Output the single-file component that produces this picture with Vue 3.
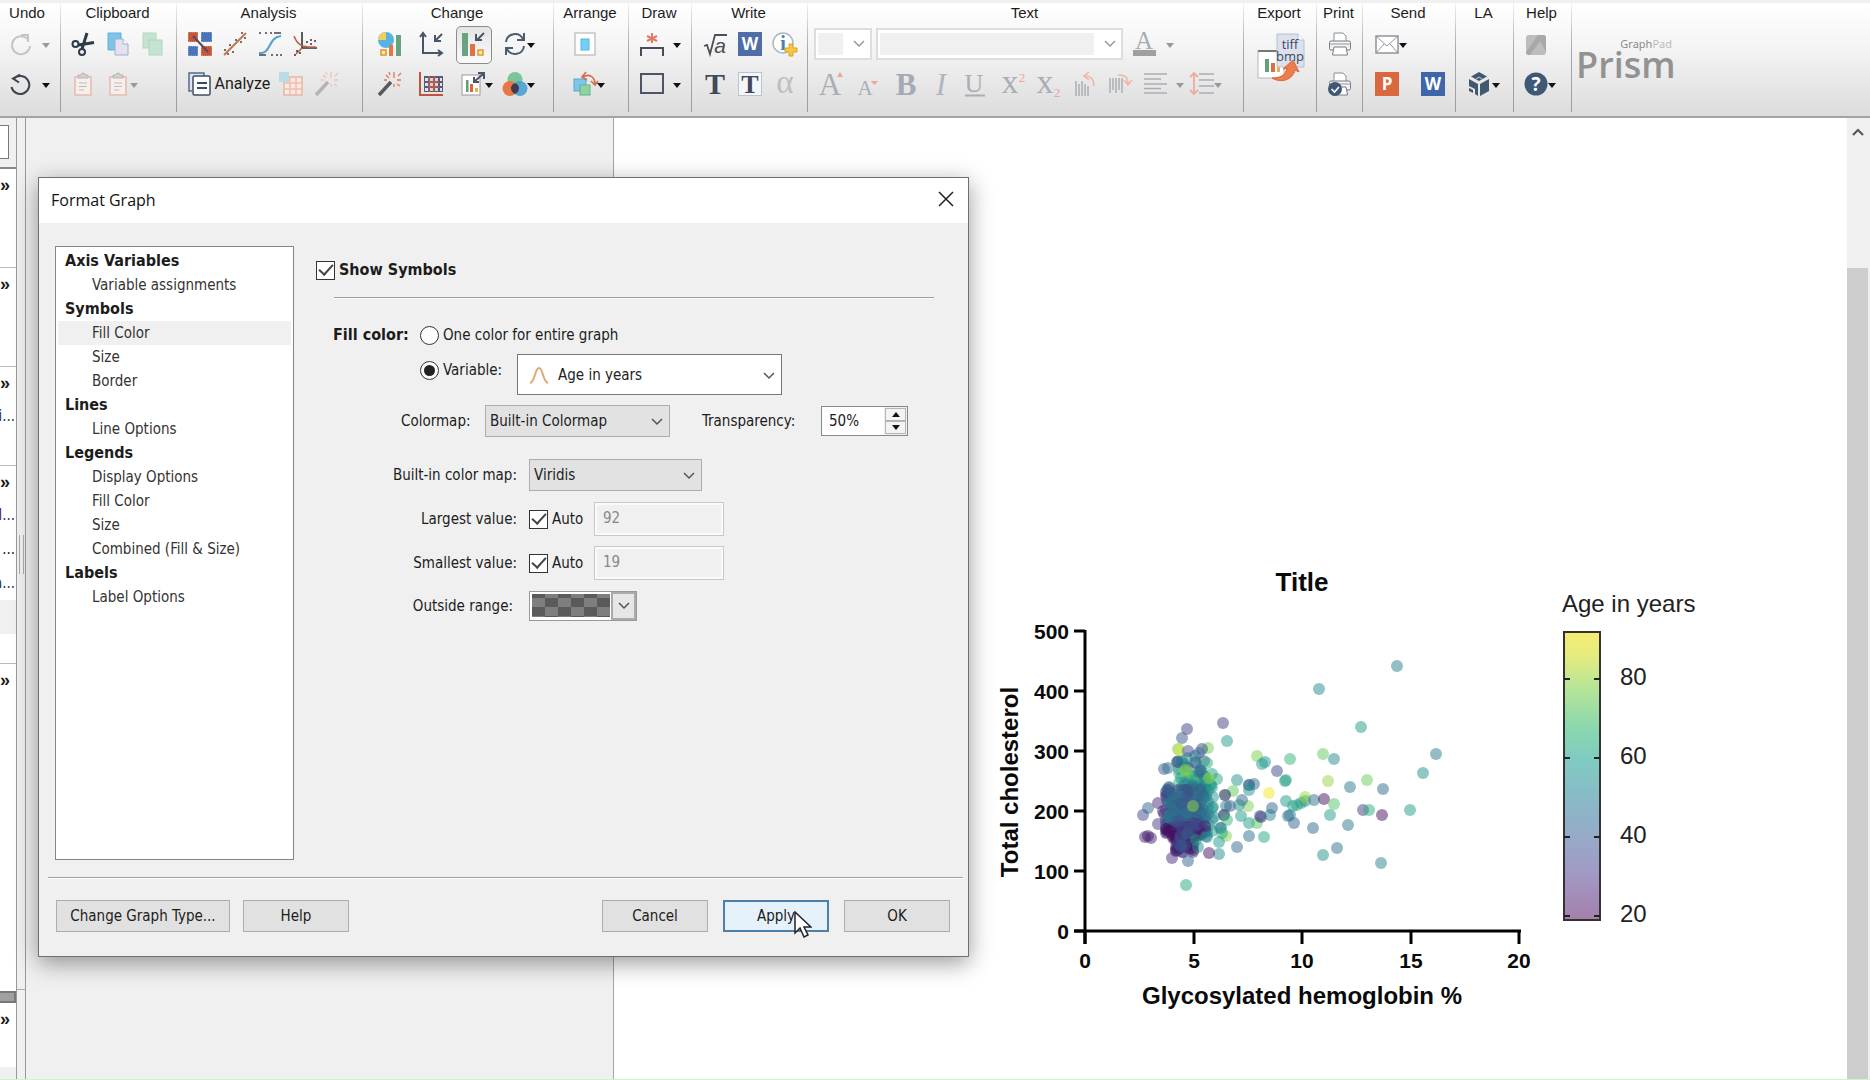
<script setup>
import { ref } from 'vue'

const ink = '#3f4a5a'

const page = (x, y, w, h, fill, stroke) =>
  `<path d="M${x} ${y}h${w - 5}l5 5v${h - 5}h-${w}z" fill="${fill}" stroke="${stroke}"/><path d="M${x + w - 5} ${y}v5h5" fill="#fff" stroke="${stroke}"/>`

const letter = (t, x, y, size, fill, extra = '') =>
  `<text x="${x}" y="${y}" font-size="${size}" fill="${fill}" text-anchor="middle" ${extra}>${t}</text>`
const serif = 'font-family="Liberation Serif, serif"'
const sans = 'font-family="Open Sans, sans-serif" font-weight="700"'

const clipboard = `<rect x="4" y="5" width="16" height="18" fill="#f5f0ee" stroke="#e9c6bb" stroke-width="2"/><path d="M7 6h10V3h-3a2 2 0 0 0-4 0H7z" fill="#d2d2d2" stroke="#b5b5b5"/><path d="M8 11h8M8 14.500h8M8 18h5" stroke="#c9b9b4"/>`
const printer = `<path d="M6 9V1h9l3 3v5" fill="#fff" stroke="#8a8f98"/><rect x="1.500" y="9" width="21" height="9" rx="1.500" fill="#f2f3f5" stroke="#777d88"/><path d="M1.500 12h21" stroke="#999"/><path d="M6 15h12l1.500 8h-15z" fill="#fff" stroke="#777d88"/>`
const wand = (a, b) =>
  `<path d="M2 23L14 10" stroke="${a}" stroke-width="3.500"/><path d="M17 6V0M17 12v3M12 6L9 3M21 4l3-3M20 8h4M10 8H7M20 12l3 2M13 3l-1-3" stroke="${b}" stroke-width="1.300"/>`

const icons = {
  redo: '<path d="M18 6.500A9 9 0 1 0 21 14M12 3h7v7" fill="none" stroke="#c2c4c7" stroke-width="2"/>',
  undo: '<path d="M5 6.500A9 9 0 1 1 2.500 15M11 2.500L4 6.500l6 4" fill="none" stroke="#3b4550" stroke-width="2"/>',
  cut: '<g fill="none" stroke="#2f3a49"><circle cx="4.500" cy="12" r="3" stroke-width="2"/><circle cx="11" cy="20" r="3" stroke-width="2"/><path d="M7.500 13L23 10.500M11 17L16 1" stroke-width="3"/></g>',
  copy: '<path d="M2 1h13v17H2z" fill="#7cc4ea" stroke="#62b0dc"/>' + page(9, 7, 13, 16, '#e4e2f0', '#9fb0cc'),
  stack: '<rect x="2" y="1" width="13" height="15" fill="#c5e3cf" stroke="#b5d9c1"/><rect x="8" y="8" width="13" height="15" fill="#c5e3cf" stroke="#b0d5bd"/>',
  clip: clipboard,
  columns: '<g stroke="#fff" stroke-dasharray="1 1" stroke-width=".6"><rect width="10" height="10" fill="#c4573a"/><rect x="13" width="11" height="10" fill="#4a74b8"/><rect y="14" width="10" height="10" fill="#4a74b8"/><rect x="13" y="14" width="11" height="10" fill="#c4573a"/></g><path d="M5 4l15 16" stroke="#5a4a5a" stroke-width="2"/>',
  fit: '<path d="M1 23L23 1" stroke="#c9704f" stroke-width="2"/><g fill="#444"><circle cx="2" cy="18" r="1"/><circle cx="7" cy="13" r="1"/><circle cx="10" cy="20" r="1"/><circle cx="13" cy="8" r="1"/><circle cx="18" cy="10" r="1"/><circle cx="19" cy="1" r="1"/><circle cx="22" cy="6" r="1"/><circle cx="5" cy="22" r="1"/></g>',
  curve: '<path d="M1 21c12 2 9-16 22-17" fill="none" stroke="#5aa2cc" stroke-width="2.200"/><path d="M1 1h2M7 1h2M12 1h2M16 1h7M1 23h7M13 23h2M18 23h2M22 23h2" stroke="#444" stroke-width="1.600"/>',
  decay: '<path d="M9 0v16h15" fill="none" stroke="#333" stroke-width="1.600"/><path d="M1 4c3 8 7 12 22 11M9 16l-6 6" fill="none" stroke="#b9604a" stroke-width="1.600"/><g fill="#333"><circle cx="14" cy="10" r="1"/><circle cx="18" cy="8" r="1"/><circle cx="22" cy="9" r="1"/><circle cx="18" cy="12" r="1"/><circle cx="4" cy="19" r="1"/><circle cx="2" cy="23" r="1"/><circle cx="7" cy="21" r="1"/></g>',
  analyze: '<path d="M4 19H1V1h15v3" fill="#dfe5f0" stroke="#56698f" stroke-width="1.500"/><rect x="5" y="4" width="17" height="19" rx="1.500" fill="#fff" stroke="#3d4c66" stroke-width="1.500"/><path d="M9 11h10M9 16h10" stroke="#3d4c66" stroke-width="2"/>',
  table: '<rect x="5" y="5" width="18" height="18" fill="#fbeae4" stroke="#e8b6a4" stroke-width="1.500"/><path d="M5 11h18M5 17h18M11 5v18M17 5v18" stroke="#eebdac" stroke-width="1.500"/><rect width="10" height="10" fill="#b9dbe8"/>',
  wandOff: wand('#b4b4b4', '#f0c3b5'),
  wand: wand('#545a63', '#e0765a'),
  chartType: '<circle cx="9" cy="8" r="8" fill="#55b4e4"/><path d="M9 8V0A8 8 0 0 0 1 8z" fill="#f0cf5a"/><rect x="4" y="18" width="5" height="5" fill="#ffe9a8" stroke="#d9942f" stroke-width="1.500"/><rect x="12" y="13" width="4" height="11" fill="#e27845"/><rect x="19" y="3" width="5" height="21" fill="#66a37e"/>',
  axes: '<path d="M4 2v19h18M1 5l3-4 3 4M19 18l4 3-4 3M23 2l-7 7M16 3v6h6" fill="none" stroke="#49566a" stroke-width="2"/>',
  bars: '<rect x="1" y="1" width="6" height="23" fill="#6aa382"/><rect x="9" y="12" width="5" height="12" fill="#e07245"/><rect x="17" y="18" width="5" height="5" fill="#ffe7a0" stroke="#d99a37" stroke-width="1.500"/><path d="M23 1l-7 7M15 2v6h6" fill="none" stroke="#49566a" stroke-width="2"/>',
  cycle: '<path d="M3 10a9 9 0 0 1 17-3M21 1v7h-7M21 14a9 9 0 0 1-17 3M3 23v-7h7" fill="none" stroke="#4d5b6c" stroke-width="2"/>',
  grid: '<path d="M1 0v23h23" fill="none" stroke="#c2533d" stroke-width="2"/><rect x="5" y="4" width="19" height="16" fill="#55597c"/><path d="M6 6h3v3H6zM6 11h3v3H6zM6 16h3v3H6zM21 6h2v3h-2zM21 11h2v3h-2zM21 16h2v3h-2z" fill="#dfe2ee"/><path d="M11 6h3v3h-3zM11 11h3v3h-3zM11 16h3v3h-3zM16 6h3v3h-3zM16 11h3v3h-3zM16 16h3v3h-3z" fill="#f6cdbd"/><path d="M10 4v16M15 4v16M10 10h10M10 15h10" stroke="#cf6a4c"/>',
  resize: '<rect x="1" y="3" width="18" height="20" fill="#fff" stroke="#999"/><rect x="5" y="8" width="2.500" height="12" fill="#5f9e79"/><rect x="9" y="12" width="3" height="8" fill="#d8663e"/><rect x="14" y="16" width="3" height="4" fill="#e8b34d"/><path d="M13 10L23 1M17 1h6v6M13 5v5h5" fill="none" stroke="#49566a" stroke-width="2"/>',
  venn: '<circle cx="12" cy="7.500" r="7.500" fill="#7cc49a"/><circle cx="7" cy="16.500" r="7.500" fill="#e87747"/><circle cx="17" cy="16.500" r="7.500" fill="#4a9fd2" opacity=".9"/><path d="M12 11a7 7 0 0 0-4 4 7 7 0 0 0 4 7 7 7 0 0 0 4-7 7 7 0 0 0-4-4z" fill="#3f3d52"/>',
  center: '<rect x="2" y="1" width="20" height="22" fill="#fff" stroke="#aaa"/><rect x="8" y="7" width="8" height="11" fill="#78cdf4" stroke="#57b4e2"/>',
  rotate: '<rect x="1" y="7" width="12" height="12" fill="#7ec6ea" stroke="#5aa7d2"/><rect x="7" y="13" width="10" height="10" fill="#8ed2a6" stroke="#62b381"/><path d="M10 5c6-4 12 0 12 7M13 0l-4 5 5 3M18 9l4 4 3-4" fill="none" stroke="#d56a4d" stroke-width="1.600"/>',
  bracket: '<path d="M1 24v-8h22v8" fill="none" stroke="#454c5a" stroke-width="2"/><path d="M12 1v10M7 4l10 5M17 4L7 9" stroke="#e07a62" stroke-width="2"/>',
  square: '<rect x="1" y="2" width="22" height="19" fill="none" stroke="#4c5566" stroke-width="2"/>',
  sqrt: '<path d="M1 14l3-1 3 9L12 3h12" fill="none" stroke="#4a4f58" stroke-width="1.800"/>' + letter('a', 17, 21, 21, '#4a4f58', 'font-family="Liberation Sans, sans-serif" font-style="italic"'),
  wordBox: '<rect width="24" height="24" fill="#4f6ea8"/>' + letter('W', 12, 18, 17, '#fff', sans),
  info: '<circle cx="10" cy="11" r="10" fill="#fff" stroke="#aeb6c0" stroke-width="1.500"/>' + letter('i', 10, 18, 20, '#4a7fae', serif + ' font-weight="700"') + '<path d="M16 12h4v4h4v4h-4v4h-4v-4h-4v-4h4z" fill="#f6c744" stroke="#d9a32a"/>',
  bigT: letter('T', 12, 22, 30, ink, serif + ' font-weight="700"'),
  boxT: '<rect x=".5" y=".5" width="23" height="23" fill="#f4f6f9" stroke="#b8c4d4"/>' + letter('T', 12, 21, 26, ink, serif + ' font-weight="700"'),
  alpha: letter('α', 12, 21, 33, '#bcbfc4', serif),
  grow: letter('A', 11, 23, 31, '#a9aeb5', serif) + '<path d="M18 5l3-5 3 5z" fill="#efa595"/>',
  shrink: letter('A', 10, 23, 21, '#a9aeb5', serif) + '<path d="M16 9h7l-3.500 4z" fill="#efa595"/>',
  bold: letter('B', 15, 23, 31, '#a4abb4', serif + ' font-weight="700"'),
  italic: letter('I', 14, 23, 31, '#b0b5bc', serif + ' font-style="italic"'),
  under: letter('U', 11, 20, 26, '#a9aeb5', serif) + '<path d="M2 23.500h20" stroke="#a9aeb5" stroke-width="2"/>',
  sup: letter('x', 11, 21, 34, '#a9aeb5', serif) + letter('2', 23, 10, 13, '#efa595', serif),
  sub: letter('x', 10, 21, 34, '#a9aeb5', serif) + letter('2', 22, 25, 13, '#efa595', serif),
  turnUp: '<path d="M5 9v15M8 12v12M11 9v15M14 12v12M17 14v10" stroke="#a9aeb5" stroke-width="1.500"/><path d="M14 4c6 0 9 3 9 10M18 0l-5 4 5 4" fill="none" stroke="#f2b3a6" stroke-width="1.600"/>',
  turnDown: '<path d="M3 6v15M6 6v12M9 6v15M12 6v12M15 6v15" stroke="#a9aeb5" stroke-width="1.500"/><path d="M11 3c7 0 10 2 10 9M17 8l4 5 4-5" fill="none" stroke="#f2b3a6" stroke-width="1.600"/>',
  align: '<path d="M1 2h23M1 7h17M1 12h23M1 16.500h17M1 21h23" stroke="#a9aeb5" stroke-width="1.600"/>',
  spacing: '<path d="M9 2h15M9 8h15M9 14h15M9 21h15" stroke="#a9aeb5" stroke-width="1.600"/><path d="M4 1v21M0 5l4-4 4 4M0 18l4 4 4-4" fill="none" stroke="#f0ab9d" stroke-width="1.800"/>',
  fontColor: letter('A', 11, 17, 25, '#a9aeb5', serif) + '<rect y="18" width="23" height="6" fill="#a0a0a0"/>',
  printer,
  printCheck: printer + '<circle cx="7" cy="17" r="7" fill="#3f5878"/><path d="M3.500 17l3 3 4.500-5" fill="none" stroke="#fff" stroke-width="1.600"/>',
  mail: '<rect x="1" y="4" width="22" height="17" fill="#fff" stroke="#8e939c" stroke-width="1.500"/><path d="M1 4l11 10L23 4M1 21l8-9M23 21l-8-9" fill="none" stroke="#8e939c"/>',
  powerpoint: '<rect width="24" height="24" fill="#d9683f"/>' + letter('P', 12, 18, 17, '#fff', sans),
  word: '<rect width="24" height="24" fill="#3f66a8"/>' + letter('W', 12, 18, 17, '#fff', sans),
  cube: '<path d="M11 0l8 4.500-8 4.500-8-4.500z" fill="#41596e"/><path d="M1 7l9 5v12l-3-2v-5l-6-3zM21 7l-9 5v12l9-5z" fill="#41596e"/><path d="M1 16l4 2v3l-4-2z" fill="#41596e"/><path d="M8 7l3-2 3 2" fill="none" stroke="#c8d0d8"/>',
  prism: '<rect x="2" y="3" width="20" height="20" rx="3" fill="#bdbdbd"/><path d="M2 20L14 3h5a3 3 0 0 1 3 3v14L16 9 6 23H5a3 3 0 0 1-3-3z" fill="#a0a0a0" opacity=".7"/>',
  help: '<circle cx="12" cy="12" r="11.500" fill="#3f5878"/>' + letter('?', 12, 19, 19, '#fff', sans),
}

const b = (icon, label, more = {}) => ({ icon, label, ...more })
const groups = [
  { id: 'undo', title: 'Undo', rows: [[b('redo', 'Redo', { far: 1, off: 1 })], [b('undo', 'Undo', { far: 1 })]] },
  { id: 'clipboard', title: 'Clipboard', rows: [[b('cut', 'Cut'), b('copy', 'Copy'), b('stack', 'Duplicate')], [b('clip', 'Paste'), b('clip', 'Paste special', { near: 1, off: 1 })]] },
  { id: 'analysis', title: 'Analysis', rows: [[b('columns', 'Compare'), b('fit', 'Linear fit'), b('curve', 'Curve fit'), b('decay', 'Decay fit')], [b('analyze', 'Analyze', { text: 'Analyze' }), b('table', 'Change data'), b('wandOff', 'Wizard')]] },
  { id: 'change', title: 'Change', rows: [[b('chartType', 'Graph type'), b('axes', 'Format axes'), b('bars', 'Format graph', { pressed: 1 }), b('cycle', 'Reverse', { near: 1 })], [b('wand', 'Magic'), b('grid', 'Data on graph'), b('resize', 'Resize', { near: 1 }), b('venn', 'Color scheme', { near: 1 })]] },
  { id: 'arrange', title: 'Arrange', rows: [[b('center', 'Center')], [b('rotate', 'Rotate', { near: 1 })]] },
  { id: 'draw', title: 'Draw', rows: [[b('bracket', 'Bracket', { far: 1 })], [b('square', 'Shape', { far: 1 })]] },
  { id: 'write', title: 'Write', rows: [[b('sqrt', 'Equation'), b('wordBox', 'Word object'), b('info', 'Info')], [b('bigT', 'Text'), b('boxT', 'Text box'), b('alpha', 'Greek')]] },
  { id: 'text', title: 'Text', combos: true, rows: [[b('fontColor', 'Text color', { far: 1, off: 1 })], [b('grow', 'Larger'), b('shrink', 'Smaller'), b('bold', 'Bold'), b('italic', 'Italic'), b('under', 'Underline'), b('sup', 'Superscript'), b('sub', 'Subscript'), b('turnUp', 'Rotate left'), b('turnDown', 'Rotate right'), b('align', 'Align', { far: 1, off: 1 }), b('spacing', 'Line spacing', { near: 1, off: 1 })]] },
  { id: 'export', title: 'Export', rows: [] },
  { id: 'print', title: 'Print', rows: [[b('printer', 'Print')], [b('printCheck', 'Print preview')]] },
  { id: 'send', title: 'Send', rows: [[b('mail', 'Mail', { near: 1 })], [b('powerpoint', 'PowerPoint'), b('word', 'Word')]] },
  { id: 'la', title: 'LA', rows: [[], [b('cube', 'LabArchives', { near: 1 })]] },
  { id: 'help', title: 'Help', rows: [[b('prism', 'Prism')], [b('help', 'Help', { near: 1 })]] },
]

const sections = [
  { cls: 'normal', rows: [] },
  { cls: 'normal', rows: [] },
  { cls: 'normal', rows: [{ t: 'i...', c: 'teal' }] },
  { cls: 'tall', rows: [{ t: 'l...', c: 'violet' }, { t: '...' }, { t: 'a...', c: 'teal' }, { t: '', sel: true }] },
  { cls: 'rest', rows: [] },
]

const tree = [
  { name: 'Axis Variables', items: ['Variable assignments'] },
  { name: 'Symbols', items: ['Fill Color', 'Size', 'Border'], active: 0 },
  { name: 'Lines', items: ['Line Options'] },
  { name: 'Legends', items: ['Display Options', 'Fill Color', 'Size', 'Combined (Fill & Size)'] },
  { name: 'Labels', items: ['Label Options'] },
]

const showSymbols = ref(true)
const fillMode = ref('variable')
const autoMax = ref(true)
const autoMin = ref(true)

// Viridis ramp over the age range 19..92
const ramp = [[68, 1, 84], [72, 40, 120], [62, 73, 137], [49, 104, 142], [38, 130, 142], [31, 158, 137], [53, 183, 121], [110, 206, 88], [181, 222, 43], [253, 231, 37]]
function colorOf(age) {
  const t = Math.min(0.999, Math.max(0, (age - 19) / 73)) * 9
  const i = Math.floor(t)
  const mix = ramp[i].map((v, k) => Math.round(v + (ramp[i + 1][k] - v) * (t - i)))
  return `rgb(${mix.join(',')})`
}

// Dense centre of the cloud: count, x range, y range, age range
const bands = [
  [12, 1178, 1210, 754, 772, 38, 60],
  [24, 1178, 1206, 772, 788, 45, 70],
  [34, 1192, 1216, 784, 832, 50, 62],
  [40, 1163, 1192, 790, 832, 20, 36],
  [60, 1166, 1206, 788, 820, 34, 52],
  [50, 1166, 1206, 812, 832, 38, 50],
  [40, 1164, 1206, 826, 836, 20, 34],
  [44, 1172, 1194, 834, 852, 19, 32],
  [16, 1176, 1200, 818, 846, 30, 44],
]
let seed = 11
const rand = () => (seed = (seed * 16807) % 2147483647) / 2147483647
const cloud = bands.flatMap(([n, x0, x1, y0, y1, a0, a1]) =>
  Array.from({ length: n }, () => [
    Math.round(x0 + rand() * (x1 - x0)),
    Math.round(y0 + rand() * (y1 - y0)),
    a0 + rand() * (a1 - a0),
  ]))

const outer = [
  [1397, 666, 50], [1319, 689, 54], [1361, 727, 58], [1436, 754, 48], [1423, 773, 55], [1223, 723, 33], [1227, 741, 59],
  [1187, 729, 33], [1182, 738, 38], [1257, 756, 77], [1265, 762, 56], [1262, 764, 60], [1290, 759, 67], [1323, 754, 74],
  [1334, 759, 54], [1277, 771, 35], [1286, 780, 64], [1285, 781, 58], [1328, 781, 80], [1367, 780, 75], [1350, 787, 49],
  [1383, 789, 44], [1269, 793, 91], [1286, 801, 59], [1297, 805, 64], [1293, 806, 60], [1301, 803, 58], [1305, 801, 56],
  [1305, 797, 80], [1314, 800, 46], [1324, 799, 22], [1334, 804, 72], [1330, 815, 60], [1363, 810, 32], [1369, 810, 64],
  [1382, 815, 22], [1410, 810, 59], [1348, 825, 48], [1313, 828, 44], [1294, 823, 42], [1288, 816, 42], [1290, 815, 50],
  [1337, 848, 46], [1323, 855, 56], [1381, 863, 52], [1237, 847, 43], [1249, 836, 45], [1264, 837, 62], [1249, 823, 60],
  [1257, 823, 72], [1261, 817, 28], [1260, 816, 36], [1270, 815, 50], [1272, 808, 42], [1241, 816, 58], [1248, 806, 77],
  [1242, 800, 42], [1239, 805, 54], [1237, 780, 56], [1249, 785, 48], [1249, 785, 40], [1254, 784, 44], [1249, 790, 56],
  [1233, 791, 74], [1225, 795, 70], [1225, 795, 26], [1226, 806, 48], [1224, 815, 64], [1224, 815, 28], [1230, 806, 42],
  [1227, 820, 68], [1220, 828, 58], [1221, 828, 44], [1226, 836, 78], [1222, 833, 62], [1219, 842, 60], [1219, 854, 55],
  [1209, 853, 22], [1186, 885, 62], [1188, 861, 42], [1172, 858, 28], [1198, 847, 56], [1196, 840, 58],
  [1148, 808, 43], [1143, 815, 36], [1145, 837, 26], [1148, 836, 24], [1151, 838, 26], [1158, 803, 28], [1158, 824, 32],
  [1178, 749, 74], [1179, 750, 88], [1208, 748, 76], [1202, 749, 34], [1199, 753, 44], [1188, 751, 36], [1177, 762, 36],
  [1164, 769, 40], [1168, 768, 46], [1207, 763, 64], [1185, 770, 80], [1186, 772, 76], [1169, 787, 46], [1168, 790, 36],
  [1200, 770, 44], [1201, 771, 50], [1199, 772, 42], [1217, 779, 62], [1212, 774, 60], [1209, 778, 80], [1206, 836, 56], [1207, 837, 52],
  [1208, 802, 52], [1208, 814, 50], [1205, 826, 26], [1193, 806, 80],
]
const points = [...cloud, ...outer]

const yTicks = [500, 400, 300, 200, 100, 0].map((v, i) => ({ v, y: 631 + i * 60 }))
const xTicks = [[0, 1085], [5, 1194], [10, 1302], [15, 1411], [20, 1519]]
const ageTicks = [[80, 679], [60, 758], [40, 837], [20, 916]]
</script>

<template>
  <div class="app">
    <header class="toolbar">
      <section v-for="g in groups" :key="g.id" class="group" :class="'g-' + g.id">
        <h2>{{ g.title }}</h2>
        <button v-if="g.id === 'export'" type="button" class="export" aria-label="Export">
          <svg viewBox="0 0 48 50" width="48" height="50">
            <rect x="1" y="18" width="26" height="27" fill="#fff" stroke="#b5b5b5" />
            <path d="M1 18h26" stroke="#777" stroke-width="2" />
            <rect x="8" y="26" width="4" height="13" fill="#62a077" /><rect x="14" y="30" width="4" height="9" fill="#dd6f45" /><rect x="20" y="34" width="3" height="5" fill="#e7b24f" />
            <path d="M20 1h21l6 6v27H20z" fill="#dde1ee" stroke="#b9bfd0" /><path d="M41 1v6h6" fill="#fff" stroke="#b9bfd0" />
            <text x="33" y="16" font-size="13" text-anchor="middle" fill="#3d4763">tiff</text>
            <text x="33" y="28" font-size="13" text-anchor="middle" fill="#3d4763">bmp</text>
            <path d="M15 45c10 0 14-4 15-10l-4 1 10-9 6 12-4-2c-2 9-13 14-23 8z" fill="#ee7d4c" stroke="#d4663a" />
          </svg>
        </button>
        <div v-for="(row, r) in g.rows" :key="r" class="tools">
          <template v-if="g.combos && r === 0">
            <span class="combo size"><select aria-label="Font size" disabled></select><i></i><svg class="chev" viewBox="0 0 12 8"><path d="M1 1l5 5 5-5" /></svg></span>
            <span class="combo face"><select aria-label="Font" disabled></select><i></i><svg class="chev" viewBox="0 0 12 8"><path d="M1 1l5 5 5-5" /></svg></span>
          </template>
          <button v-for="(t, k) in row" :key="k" type="button" class="tool" :class="{ pressed: t.pressed, wide: t.text }" :aria-label="t.label">
            <svg viewBox="0 0 24 24" width="24" height="24" v-html="icons[t.icon]"></svg>
            <span v-if="t.text">{{ t.text }}</span>
            <i v-if="t.near || t.far" class="caret" :class="{ far: t.far, off: t.off }"></i>
          </button>
        </div>
      </section>
      <div class="brand"><small>Graph<span>Pad</span></small><strong>Prism</strong></div>
    </header>

    <main class="workspace">
      <aside class="navigator">
        <div class="search"><span></span></div>
        <section v-for="(s, i) in sections" :key="i" :class="s.cls">
          <b>»</b>
          <p v-for="(r, k) in s.rows" :key="k" :class="[r.c, { sel: r.sel }]">{{ r.t }}</p>
        </section>
        <div class="bar"></div>
        <section class="last"><b>»</b></section>
        <div class="tail"></div>
      </aside>
      <div class="splitter"><span></span><em></em></div>
      <div class="margin"></div>
      <div class="sheet">
        <svg class="chart" viewBox="990 560 720 460" width="720" height="460" role="img" aria-label="Total cholesterol by glycosylated hemoglobin">
          <defs>
            <linearGradient id="age" x1="0" y1="0" x2="0" y2="1">
              <stop offset="0" stop-color="#f7ed72" /><stop offset="0.08" stop-color="#e6ec7e" /><stop offset="0.18" stop-color="#bce695" />
              <stop offset="0.33" stop-color="#8bd8ae" /><stop offset="0.44" stop-color="#80cbc2" /><stop offset="0.58" stop-color="#88bac6" />
              <stop offset="0.72" stop-color="#97a9c8" /><stop offset="0.84" stop-color="#a299c4" /><stop offset="1" stop-color="#a480ab" />
            </linearGradient>
          </defs>
          <g class="bold">
            <text x="1302" y="591" font-size="26" text-anchor="middle">Title</text>
            <text v-for="t in yTicks" :key="t.v" x="1069" :y="t.y + 8" font-size="21" text-anchor="end">{{ t.v }}</text>
            <text v-for="t in xTicks" :key="t[0]" :x="t[1]" y="968" font-size="21" text-anchor="middle">{{ t[0] }}</text>
            <text x="1302" y="1004" font-size="24" text-anchor="middle">Glycosylated hemoglobin %</text>
            <text transform="translate(1018 782) rotate(-90)" font-size="24" text-anchor="middle">Total cholesterol</text>
          </g>
          <circle v-for="(p, i) in points" :key="i" :cx="p[0]" :cy="p[1]" r="6" :fill="colorOf(p[2])" fill-opacity="0.5" />
          <g stroke="#000" stroke-width="3" fill="none">
            <path d="M1085 630V944M1074 931H1521" />
            <path v-for="t in yTicks" :key="t.v" :d="`M1074 ${t.y}h11`" />
            <path v-for="t in xTicks" :key="t[0]" :d="`M${t[1]} 931v13`" />
          </g>
          <rect x="1564" y="632" width="36" height="288" fill="url(#age)" stroke="#333" stroke-width="2" />
          <g fill="#222">
            <text x="1562" y="612" font-size="24">Age in years</text>
            <template v-for="t in ageTicks" :key="t[0]">
              <path :d="`M1564 ${t[1]}h6M1594 ${t[1]}h6`" stroke="#222" stroke-width="2" />
              <text x="1620" :y="t[1] + 6" font-size="24">{{ t[0] }}</text>
            </template>
          </g>
        </svg>
      </div>
      <div class="scroll"><svg viewBox="0 0 12 8" class="up"><path d="M1 7l5-5 5 5" /></svg><div></div></div>
    </main>

    <div class="dialog" role="dialog" aria-label="Format Graph">
      <div class="titlebar">
        <span>Format Graph</span>
        <button type="button" aria-label="Close"><svg viewBox="0 0 16 16" width="16" height="16"><path d="M1 1l14 14M15 1L1 15" /></svg></button>
      </div>
      <div class="body">
        <nav class="tree">
          <template v-for="s in tree" :key="s.name">
            <strong>{{ s.name }}</strong>
            <a v-for="(n, i) in s.items" :key="n" href="#" :class="{ active: s.active === i }">{{ n }}</a>
          </template>
        </nav>
        <form class="form" @submit.prevent>
          <label class="show"><input v-model="showSymbols" type="checkbox" /><b>Show Symbols</b></label>
          <hr />
          <div class="line one">
            <b class="lead">Fill color:</b>
            <label><input v-model="fillMode" type="radio" value="one" />One color for entire graph</label>
          </div>
          <div class="line two">
            <label><input v-model="fillMode" type="radio" value="variable" />Variable:</label>
            <span class="drop variable">
              <svg class="bell" viewBox="0 0 20 18" width="20" height="18"><path d="M1 17c5-1 5-15 9-15s4 14 9 15" /></svg>
              <select aria-label="Variable"><option>Age in years</option></select>
              <svg class="chev" viewBox="0 0 12 8"><path d="M1 1l5 5 5-5" /></svg>
            </span>
          </div>
          <div class="line three">
            <label for="cm">Colormap:</label>
            <span class="drop gray cm"><select id="cm"><option>Built-in Colormap</option></select><svg class="chev" viewBox="0 0 12 8"><path d="M1 1l5 5 5-5" /></svg></span>
            <label for="tr" class="tr">Transparency:</label>
            <span class="spin"><input id="tr" type="text" value="50%" /><span><button type="button" aria-label="Increase"><i class="up"></i></button><button type="button" aria-label="Decrease"><i></i></button></span></span>
          </div>
          <div class="line four">
            <label for="map" class="cap">Built-in color map:</label>
            <span class="drop gray map"><select id="map"><option>Viridis</option></select><svg class="chev" viewBox="0 0 12 8"><path d="M1 1l5 5 5-5" /></svg></span>
          </div>
          <div class="line five">
            <label for="max" class="cap">Largest value:</label>
            <label class="auto"><input v-model="autoMax" type="checkbox" />Auto</label>
            <input id="max" class="field" type="text" value="92" disabled />
          </div>
          <div class="line five">
            <label for="min" class="cap">Smallest value:</label>
            <label class="auto"><input v-model="autoMin" type="checkbox" />Auto</label>
            <input id="min" class="field" type="text" value="19" disabled />
          </div>
          <div class="line seven">
            <span class="cap">Outside range:</span>
            <button type="button" class="swatch" aria-label="Outside range"><i></i><span><svg viewBox="0 0 12 8" width="12" height="8"><path d="M1 1l5 5 5-5" /></svg></span></button>
          </div>
        </form>
      </div>
      <div class="footer">
        <button type="button" class="type">Change Graph Type...</button>
        <button type="button">Help</button>
        <button type="button" class="cancel">Cancel</button>
        <button type="button" class="hover">Apply</button>
        <button type="button">OK</button>
      </div>
      <svg class="pointer" viewBox="0 0 18 28" width="18" height="28"><path d="M1 1v21l5-5 4 9 4-2-4-8h7z" fill="#fff" stroke="#222" stroke-width="1.500" /></svg>
    </div>
  </div>
</template>

<style>
body { margin: 0; overflow: hidden; }
</style>

<style scoped>
* { box-sizing: border-box; }
.app {
  position: relative; display: flex; flex-direction: column; height: 100vh; overflow: hidden;
  font: 15px/24px "DejaVu Sans Condensed", "DejaVu Sans", sans-serif; color: #1c1c1c; background: #f0f0f0;
  border-bottom: 1px solid #cdf3cb;
}
button { font: inherit; color: inherit; padding: 0; margin: 0; border: 0; background: none; }
.chev { position: absolute; width: 12px; height: 8px; pointer-events: none; }
.chev path, .swatch path, .scroll path { fill: none; stroke: #555; stroke-width: 1.5; }

.toolbar {
  display: flex; flex: none; height: 118px; border-top: 3px solid #f0f0f0; border-bottom: 2px solid #a3a3a3;
  background: linear-gradient(#fff, #f4f4f4 40%, #dcdcdc);
}
.group {
  --pad: 5px; --cell: 35px;
  position: relative; flex: none; display: flex; flex-direction: column; margin-bottom: 4px;
  border-right: 1px solid; border-image: linear-gradient(#f4f4f4, #aaa 40%, #9c9c9c) 1;
}
.group h2 { margin: 0; height: 21px; padding-right: 2px; font: 15px/20px "Liberation Sans", sans-serif; text-align: center; }
.tools { display: flex; align-items: center; height: 40px; padding-left: var(--pad); }
.tool { display: flex; align-items: center; flex: none; min-width: var(--cell); height: 36px; padding-left: calc((var(--cell) - 24px) / 2); }
.tool svg { flex: none; overflow: visible; }
.tool.pressed { position: relative; }
.tool.pressed::before { content: ""; position: absolute; left: 4px; top: 0; width: 34px; height: 36px; border: 1px solid #8c8c8c; border-radius: 5px; background: linear-gradient(#e4e4e4, #fafafa); }
.tool.pressed svg { position: relative; }
.tool.wide { width: 91px; font: 16px/24px Roboto, sans-serif; gap: 3px; }
.caret { border: 4px solid transparent; border-top: 5px solid #111; border-bottom: 0; margin-top: 2px; }
.caret.far { margin-left: 9px; }
.caret.off { border-top-color: #999; }
.g-undo { width: 61px; --pad: 9px; --cell: 24px; }
.g-undo h2 { padding-right: 6px; }
.g-clipboard { width: 116px; --pad: 4px; }
.g-analysis { width: 186px; }
.g-change { width: 191px; --pad: 5px; --cell: 42px; }
.g-arrange { width: 75px; --pad: 19px; --cell: 24px; }
.g-draw { width: 63px; --pad: 11px; --cell: 24px; }
.g-write { width: 116px; }
.g-text { width: 436px; --cell: 36px; --pad: 5px; }
.g-export { width: 73px; }
.g-print { width: 46px; --pad: 11px; --cell: 24px; }
.g-send { width: 93px; --pad: 1px; --cell: 46px; }
.g-la { width: 58px; --pad: 12px; --cell: 24px; }
.g-help { width: 58px; --pad: 10px; --cell: 24px; }
.export { margin: 9px 0 0 13px; width: 48px; height: 50px; font-family: "Open Sans", sans-serif; }
.combo { position: relative; display: block; height: 32px; margin: 0 4px 0 1px; background: #fff; }
.combo + .combo { margin-left: 0; }
.combo select { width: 100%; height: 100%; appearance: none; border: 2px solid #cfcfcf; background: #fff; }
.combo i { position: absolute; left: 4px; top: 5px; bottom: 5px; right: 29px; background: #f0f0f0; }
.combo .chev { right: 7px; top: 12px; }
.combo .chev path { stroke: #999; }
.combo.size { width: 58px; }
.combo.face { width: 247px; }
.brand { display: flex; flex-direction: column; margin: 35px 0 0 4px; color: #929292; width: 96px; }
.brand small { font: 11px/12px "Noto Sans", sans-serif; align-self: flex-end; color: #8a8a8a; }
.brand small span { color: #bbb; }
.brand strong { font: 600 36px/34px "Open Sans", sans-serif; margin-top: -2px; }

.workspace { flex: 1; display: flex; min-height: 0; }
.navigator { width: 17px; flex: none; overflow: hidden; display: flex; flex-direction: column; border-right: 1px solid #999; background: #fff; font-size: 15px; }
.search { flex: none; height: 51px; padding-top: 7px; background: #f0f0f0; border-bottom: 2px solid #888; }
.search span { display: block; width: 9px; height: 34px; border: 1px solid #777; border-left: 0; background: #fff; }
.navigator section { flex: none; position: relative; overflow: hidden; border-bottom: 1px solid #bbb; display: flex; flex-direction: column; align-items: flex-end; }
.navigator b { font: 700 18px/32px "Liberation Sans", sans-serif; padding-right: 6px; }
.navigator p { margin: 0; height: 34px; line-height: 34px; padding-right: 1px; }
.navigator p.teal { color: #335; }
.navigator p.violet { color: #426; }
.navigator p.sel { width: 16px; background: #f0f0f0; }
.navigator .normal { height: 99px; }
.navigator .tall { height: 198px; }
.navigator .rest { flex: 1; border-bottom: 0; }
.bar { flex: none; height: 12px; background: #a0a0a0; border: 2px solid #777; border-left: 0; }
.navigator .last { height: 64px; border-bottom: 0; }
.tail { flex: none; height: 12px; background: #f0f0f0; }
.splitter { position: relative; width: 9px; flex: none; border-right: 1px solid #999; background: #f0f0f0; display: flex; flex-direction: column; align-items: center; }
.splitter span { width: 5px; height: 39px; margin-top: 417px; border: 1px solid #aaa; border-width: 0 1px; }
.splitter em { width: 8px; height: 1px; margin-top: 415px; background: #aaa; }
.margin { width: 588px; flex: none; border-right: 1px solid #a5a5a5; }
.sheet { flex: 1; min-width: 0; background: #fff; overflow: hidden; }
.chart { display: block; margin: 442px 0 0 376px; font-family: "Liberation Sans", sans-serif; }
.chart .bold { font-weight: 700; fill: #0a0a0a; }
.scroll { width: 23px; flex: none; display: flex; flex-direction: column; align-items: center; background: #f0f0f0; }
.scroll .up { width: 12px; height: 8px; margin: 10px 2px 132px 0; }
.scroll .up path { stroke-width: 2; }
.scroll div { flex: 1; width: 21px; align-self: flex-start; background: #cdcdcd; }

.dialog { position: absolute; left: 38px; top: 177px; width: 931px; display: flex; flex-direction: column; border: 1px solid #6f6f6f; background: #f0f0f0; box-shadow: 0 6px 22px rgba(0, 0, 0, .4); }
.titlebar { display: flex; justify-content: space-between; height: 45px; padding: 0 14px 0 12px; background: #fff; font: 16px/44px "Open Sans", sans-serif; color: #111; }
.titlebar button { height: 42px; }
.titlebar svg { display: block; }
.titlebar path { stroke: #222; stroke-width: 1.5; }
.body { display: flex; gap: 22px; padding: 23px 5px 17px 16px; margin: 0; }
.tree { display: flex; flex-direction: column; width: 239px; height: 614px; padding: 2px; border: 1px solid #82868c; background: #fff; }
.tree strong { padding-left: 7px; font-size: 16px; line-height: 24px; }
.tree a { padding-left: 34px; color: #333; text-decoration: none; }
.tree a.active { background: #f0f0f0; }
.form { flex: 1; padding-top: 12px; }
.form label, .line { display: flex; align-items: center; white-space: nowrap; }
.form b { font-size: 16px; }
.show { gap: 4px; }
hr { margin: 15px 29px 24px 18px; border: 0; border-top: 1px solid #a0a0a0; border-bottom: 1px solid #fafafa; }
input[type="checkbox"], input[type="radio"] { appearance: none; flex: none; display: flex; align-items: center; justify-content: center; width: 19px; height: 19px; margin: 0; border: 1px solid #333; background: #fff; }
input[type="radio"] { border-radius: 50%; }
input[type="radio"]:checked::after { content: ""; width: 11px; height: 11px; border-radius: 50%; background: #222; }
input[type="checkbox"]:checked::after { content: ""; width: 12px; height: 6px; margin-bottom: 4px; border: solid #444; border-width: 0 0 2px 2px; transform: rotate(-48deg); }
.one label, .two label { gap: 4px; }
.one { height: 24px; margin-bottom: 7px; }
.lead { width: 104px; padding-left: 17px; }
.two { align-items: flex-start; height: 41px; padding-left: 104px; margin-bottom: 10px; }
.two label { width: 97px; height: 32px; }
.drop { position: relative; display: block; }
.drop select { width: 100%; height: 100%; appearance: none; font: inherit; color: #222; padding: 0 4px; border: 1px solid #777; border-radius: 0; background: #fff; }
.drop .chev { right: 7px; top: 50%; margin-top: -3px; }
.drop.gray select { background: #e2e2e2; border-color: #adadad; }
.variable { width: 265px; height: 41px; }
.variable select { padding-left: 40px; }
.bell { position: absolute; left: 12px; top: 12px; }
.bell path { fill: none; stroke: #dda774; stroke-width: 2; }
.three { height: 32px; margin-bottom: 22px; padding-left: 85px; }
.three label { width: 84px; }
.cm { width: 185px; height: 32px; }
.three .tr { margin-left: 32px; width: 119px; }
.spin { display: flex; width: 87px; height: 30px; border: 1px solid #888; background: #fff; }
.spin input { flex: 1; min-width: 0; border: 0; padding: 0 7px; font: inherit; color: inherit; background: none; }
.spin > span { display: flex; flex-direction: column; width: 23px; background: #f0f0f0; padding: 1px; }
.spin button { flex: 1; display: flex; align-items: center; justify-content: center; border: 1px solid #b5b5b5; background: #f4f4f4; }
.spin button i { border: 4px solid transparent; border-top: 5px solid #111; border-bottom: 0; }
.spin button i.up { border-top: 0; border-bottom: 5px solid #111; }
.cap { justify-content: flex-end; width: 201px; margin-right: 12px; text-align: right; }
.four { height: 32px; margin-bottom: 11px; }
.map { width: 173px; height: 32px; }
.five { height: 34px; margin-bottom: 10px; }
.auto { gap: 4px; width: 65px; }
.field { width: 130px; height: 34px; padding: 0 8px 3px; font: inherit; color: #888; border: 1px solid #c8c8c8; outline: 2px solid #fafafa; outline-offset: -3px; background: #f0f0f0; }
.seven { height: 32px; }
.seven .cap { width: 197px; margin-right: 16px; }
.swatch { display: flex; width: 108px; height: 30px; border: 1px solid #999; background: #fff; }
.swatch i { flex: 1; margin: 2px 1px 3px 2px; background: conic-gradient(#5a5a5a 25%, #7e7e7e 0 50%, #5a5a5a 0 75%, #7e7e7e 0) 0 4px / 26px 18px; }
.swatch span { display: flex; align-items: center; justify-content: center; width: 25px; border: 2px solid #aaa; background: #e6e6e6; }
.footer { display: flex; gap: 15px; margin: 0 5px 0 9px; padding: 22px 13px 24px 8px; border-top: 1px solid #a0a0a0; box-shadow: inset 0 1px #fff; }
.footer button { width: 106px; height: 32px; border: 1px solid #adadad; background: #e1e1e1; }
.footer .type { width: 174px; margin-right: -2px; }
.footer .cancel { margin-left: auto; }
.footer .hover { border: 2px solid #4f7fa6; background: #e5f1fb; }
.pointer { position: absolute; left: 755px; top: 733px; }
</style>
